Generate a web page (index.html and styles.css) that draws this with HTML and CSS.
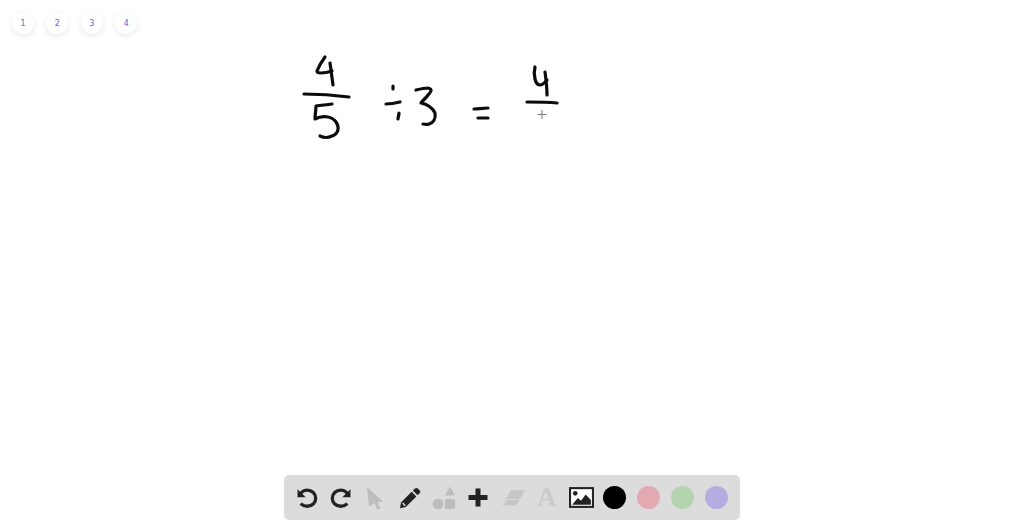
FILE: index.html
```html
<!DOCTYPE html>
<html lang="en">
<head>
    <meta charset="UTF-8">
    <title>Whiteboard</title>
    <link rel="stylesheet" href="styles.css">
</head>
<body>

<div class="board">
    <!-- Step buttons -->
    <div class="steps">
        <button class="step">1</button>
        <button class="step">2</button>
        <button class="step">3</button>
        <button class="step">4</button>
    </div>

    <!-- Handwriting on the board -->
    <svg class="ink" viewBox="0 0 1024 526" width="1024" height="526">
        <g class="pen">
            <path d="M325 57 C322 61 319 66 317 71 C317 73 319 73 321 73 C325 73 329 72 332 71"/>
            <path d="M330 63 C331 70 332 78 333 85"/>
            <path d="M304 94 C319 94 334 95 349 97"/>
            <path d="M332 104 C327 105 321 105 316 106 C316 110 315 115 315 119 C322 115 332 116 336 122 C340 128 338 134 332 136 C328 138 324 138 320 136"/>
            <path d="M393 86 L393 89"/>
            <path d="M386 104 C391 104 396 103 400 102"/>
            <path d="M399 113 C399 115 398 117 398 119"/>
            <path d="M416 90 C420 89 424 88 428 88 C433 89 431 92 428 95 C426 98 423 100 421 103 C427 104 433 108 435 113 C436 119 433 123 429 124 C427 125 425 124 423 124"/>
            <path d="M474 109 C478 109 483 108 488 108"/>
            <path d="M478 118 L488 118"/>
            <path d="M535 67 C534 71 534 75 535 79 C536 83 538 85 540 85 C543 85 545 82 547 80"/>
            <path d="M545 72 C546 80 547 87 547 95"/>
            <path d="M527 102 C537 102 547 102 557 103"/>
        </g>
        <path class="cursor" d="M542 110 L542 119 M537.5 114.5 L546.5 114.5"/>
    </svg>

    <!-- Toolbar -->
    <div class="toolbar">
        <button class="tool">
            <svg viewBox="0 0 24 24" width="22" height="22"><path class="line" d="M4 9.5 C5.5 5.5 8.5 3.5 12.2 3.5 C17.5 3.5 21.5 7.3 21.5 12.3 C21.5 17.3 17.5 21 12.2 21 C9.5 21 7 20 5.2 18"/><path class="solid" d="M1.7 2.5 L10.5 11.2 L1.7 11.2 Z"/></svg>
        </button>
        <button class="tool">
            <svg viewBox="0 0 24 24" width="22" height="22"><path class="line" d="M20 9.5 C18.5 5.5 15.5 3.5 11.8 3.5 C6.5 3.5 2.5 7.3 2.5 12.3 C2.5 17.3 6.5 21 11.8 21 C14.5 21 17 20 18.8 18"/><path class="solid" d="M22.3 2.5 L13.5 11.2 L22.3 11.2 Z"/></svg>
        </button>
        <button class="tool">
            <svg viewBox="0 0 24 24" width="24" height="24"><path class="faded" d="M3 1 L19 15.5 L13.5 16 L16.5 22.5 L13 23.5 L10.5 17 L5 20.5 Z"/></svg>
        </button>
        <button class="tool">
            <svg viewBox="0 0 24 24" width="24" height="24"><path class="solid" d="M17 2.5 C18 1.7 19 1.7 19.8 2.5 L21.8 4.5 C22.5 5.3 22.5 6.3 21.7 7 L19.6 9.2 L14.8 4.6 Z M13.6 5.8 L18.4 10.5 L7.8 21 L2 22.3 L3 16.4 Z"/><path class="cut" d="M4.6 17 L7.3 19.7"/></svg>
        </button>
        <button class="tool">
            <svg viewBox="0 0 24 24" width="24" height="24"><path class="faded" d="M18 0.5 L23 9.5 L13 9.5 Z"/><circle class="faded" cx="6" cy="18" r="5.4"/><rect class="faded" x="13" y="13" width="10" height="10" rx="1"/></svg>
        </button>
        <button class="tool">
            <svg viewBox="0 0 24 24" width="24" height="24"><path class="solid" d="M9.5 2.5 L14.5 2.5 L14.5 9 L21.5 9 L21.5 14 L14.5 14 L14.5 20.5 L9.5 20.5 L9.5 14 L2.5 14 L2.5 9 L9.5 9 Z"/></svg>
        </button>
        <button class="tool">
            <svg viewBox="0 0 24 24" width="26" height="24"><path class="faded pale" d="M10 4 L24 4 L15.5 19.5 L1 19.5 Z"/><path class="cut-thin" d="M5.5 13.5 L19 13.5 M5.5 13.5 L2.5 19"/></svg>
        </button>
        <button class="tool tool-letter">A</button>
        <button class="tool">
            <svg viewBox="0 0 24 20" width="25" height="21"><rect class="frame" x="1" y="1" width="22" height="18"/><circle class="solid" cx="6" cy="6" r="2.2"/><path class="solid" d="M3 17 L8.5 10.5 L11.5 13 L16 7 L21 12.5 L21 17 Z"/></svg>
        </button>
        <button class="swatch black"></button>
        <button class="swatch pink"></button>
        <button class="swatch green"></button>
        <button class="swatch purple"></button>
    </div>
</div>

</body>
</html>
```

FILE: styles.css
```css
body {
    margin: 0;
    background-color: #ffffff;
    font-family: "Liberation Sans", Arial, sans-serif;
    overflow: hidden;
}
button {
    border: none;
    padding: 0;
    background: none;
}
.board {
    position: relative;
    width: 1024px;
    height: 526px;
}
.ink {
    display: block;
}
.pen path {
    fill: none;
    stroke: #0c0c0c;
    stroke-width: 3.2;
    stroke-linecap: round;
    stroke-linejoin: round;
}
.cursor {
    fill: none;
    stroke: #777777;
    stroke-width: 1;
}
.steps {
    position: absolute;
    top: 12px;
    left: 12px;
    display: flex;
    gap: 12.4px;
}
.step {
    width: 22px;
    height: 22px;
    border-radius: 50%;
    background-color: #ffffff;
    box-shadow: 0 2px 6px rgba(0, 0, 0, 0.09);
    color: #6a66d0;
    font-size: 8px;
    font-family: "DejaVu Sans", sans-serif;
}
.toolbar {
    position: absolute;
    left: 284px;
    top: 475px;
    width: 456px;
    height: 45px;
    box-sizing: border-box;
    padding-left: 10px;
    display: flex;
    align-items: center;
    gap: 8.25px;
    background-color: #dcdcdc;
    border-radius: 5px;
}
.tool {
    width: 26px;
    height: 26px;
    display: flex;
    align-items: center;
    justify-content: center;
}
.tool-letter {
    font-family: "Liberation Serif", serif;
    font-size: 27px;
    font-weight: bold;
    color: #cbcbcb;
}
.line {
    fill: none;
    stroke: #222222;
    stroke-width: 3.6;
}
.solid {
    fill: #222222;
}
.faded {
    fill: #bdbdbd;
}
.pale {
    fill: #c6c6c6;
}
.cut {
    fill: none;
    stroke: #dcdcdc;
    stroke-width: 1.5;
}
.cut-thin {
    fill: none;
    stroke: #dcdcdc;
    stroke-width: 1.2;
}
.frame {
    fill: #ffffff;
    stroke: #222222;
    stroke-width: 2;
}
.swatch {
    width: 23px;
    height: 23px;
    border-radius: 50%;
    margin-left: 0.5px;
    margin-right: 2.25px;
}
.black {
    background-color: #000000;
}
.pink {
    background-color: #e2a9b0;
}
.green {
    background-color: #b4d4b0;
}
.purple {
    background-color: #b5ade2;
}
```
